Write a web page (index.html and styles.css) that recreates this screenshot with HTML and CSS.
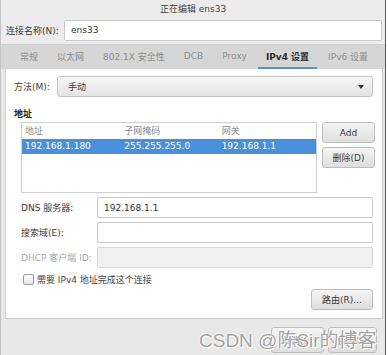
FILE: index.html
```html
<!DOCTYPE html>
<html lang="zh-CN">
<head>
    <meta charset="UTF-8">
    <title>正在编辑 ens33</title>
    <link rel="stylesheet" href="styles.css">
</head>
<body>
    <div class="window">
        <div class="titlebar">正在编辑 ens33</div>

        <div class="name-row">
            <label for="conn-name">连接名称(N):</label>
            <input type="text" id="conn-name" class="field name-field" value="ens33">
        </div>

        <div class="tabs">
            <span class="tab">常规</span>
            <span class="tab">以太网</span>
            <span class="tab">802.1X 安全性</span>
            <span class="tab">DCB</span>
            <span class="tab">Proxy</span>
            <span class="tab active">IPv4 设置</span>
            <span class="tab">IPv6 设置</span>
        </div>

        <div class="panel">
            <div class="method-row">
                <span class="label">方法(M):</span>
                <div class="combo">
                    <span>手动</span>
                    <span class="arrow"></span>
                </div>
            </div>

            <div class="section-title">地址</div>

            <div class="address-block">
                <table class="addr-table">
                    <thead>
                        <tr>
                            <th class="col-addr">地址</th>
                            <th class="col-mask">子网掩码</th>
                            <th>网关</th>
                        </tr>
                    </thead>
                    <tbody>
                        <tr class="selected">
                            <td>192.168.1.180</td>
                            <td>255.255.255.0</td>
                            <td>192.168.1.1</td>
                        </tr>
                    </tbody>
                </table>
                <div class="side-buttons">
                    <button class="btn">Add</button>
                    <button class="btn">删除(D)</button>
                </div>
            </div>

            <div class="form-rows">
                <div class="form-row">
                    <span class="label">DNS 服务器:</span>
                    <input type="text" class="field" value="192.168.1.1">
                </div>
                <div class="form-row">
                    <span class="label">搜索域(E):</span>
                    <input type="text" class="field" value="">
                </div>
                <div class="form-row disabled">
                    <span class="label">DHCP 客户端 ID:</span>
                    <input type="text" class="field" value="" disabled>
                </div>
            </div>

            <label class="check-row">
                <span class="checkbox"></span>
                需要 IPv4 地址完成这个连接
            </label>

            <div class="route-row">
                <button class="btn route-btn">路由(R)...</button>
            </div>
        </div>

        <div class="footer">
            <button class="btn footer-btn">取消(C)</button>
            <button class="btn footer-btn">保存(S)</button>
            <div class="watermark">CSDN @陈Sir的博客</div>
        </div>
    </div>
</body>
</html>
```

FILE: styles.css
```css
/* Reset */
* {
    margin: 0;
    padding: 0;
    box-sizing: border-box;
}

body {
    font-family: 'DejaVu Sans', 'Noto Sans CJK SC', sans-serif;
    font-size: 9px;
    color: #3c3c3c;
    background-color: #fff;
    width: 388px;
    height: 355px;
    overflow: hidden;
}

/* Window frame */
.window {
    position: relative;
    width: 386px;
    height: 355px;
    background-color: #e8e8e8;
    border-left: 1px solid #c4c4c4;
    border-right: 1px solid #5a5a5a;
}

.titlebar {
    height: 18px;
    line-height: 18px;
    text-align: center;
    color: #444;
    background-color: #ececec;
}

/* Connection name */
.name-row {
    display: flex;
    align-items: center;
    height: 26px;
    padding: 2px 2px 4px 5px;
    background-color: #ececec;
}

.name-row label {
    width: 58px;
}

.field {
    font-family: inherit;
    font-size: 9px;
    color: #333;
    height: 21px;
    padding: 0 6px;
    border: 1px solid #c9c9c9;
    border-radius: 2px;
    background-color: #fff;
    outline: none;
}

.name-field {
    flex: 1;
    margin-right: 1px;
}

/* Tabs */
.tabs {
    display: flex;
    height: 25px;
    padding-left: 11px;
    gap: 3px;
    background-color: #d6d6d6;
    border-top: 1px solid #cfcfcf;
}

.tab {
    display: flex;
    align-items: center;
    padding: 0 8px;
    color: #8e8e8e;
    border-bottom: 2px solid transparent;
}

.tab.active {
    color: #2e2e2e;
    font-weight: bold;
    border-bottom-color: #5b8fd0;
}

/* Main panel */
.panel {
    width: 378px;
    height: 250px;
    margin-left: 4px;
    background-color: #fff;
    border: 1px solid #cdcdcd;
    border-top: none;
    padding: 7px 8px 0 8px;
}

.method-row {
    display: flex;
    align-items: center;
}

.method-row .label {
    width: 43px;
}

.combo {
    flex: 1;
    display: flex;
    justify-content: space-between;
    align-items: center;
    height: 21px;
    padding: 0 8px 0 10px;
    border: 1px solid #c2c2c2;
    border-radius: 3px;
    background: linear-gradient(#f7f7f7, #e3e3e3);
    margin-right: 1px;
}

.arrow {
    width: 0;
    height: 0;
    border-left: 3px solid transparent;
    border-right: 3px solid transparent;
    border-top: 4px solid #333;
}

.section-title {
    margin-top: 10px;
    height: 14px;
    font-weight: bold;
    color: #222;
}

/* Address table */
.address-block {
    display: flex;
    margin-top: 1px;
    padding-left: 7px;
}

.addr-table {
    width: 296px;
    height: 71px;
    border: 1px solid #cfcfcf;
    border-collapse: collapse;
    display: block;
}

.addr-table thead,
.addr-table tbody {
    display: block;
}

.addr-table tr {
    display: flex;
}

.addr-table th,
.addr-table td {
    text-align: left;
    font-weight: normal;
    padding-left: 3px;
    width: 100px;
}

.addr-table th {
    height: 16px;
    line-height: 16px;
    color: #8a8a8a;
}

.addr-table th.col-addr {
    width: 102px;
}

.addr-table td {
    height: 15px;
    line-height: 15px;
}

.addr-table td:first-child {
    width: 102px;
}

.addr-table tr.selected {
    background-color: #4a8fda;
    color: #fff;
}

.side-buttons {
    display: flex;
    flex-direction: column;
    gap: 4px;
    margin-left: 5px;
}

.btn {
    font-family: inherit;
    font-size: 9px;
    color: #3a3a3a;
    height: 21px;
    border: 1px solid #bdbdbd;
    border-radius: 3px;
    background: linear-gradient(#f5f5f5, #dedede);
}

.side-buttons .btn {
    width: 53px;
}

/* DNS etc */
.form-rows {
    display: flex;
    flex-direction: column;
    gap: 4px;
    margin-top: 4px;
    padding-left: 7px;
}

.form-row {
    display: flex;
    align-items: center;
}

.form-row .label {
    width: 76px;
}

.form-row .field {
    flex: 1;
    margin-right: 1px;
}

.form-row.disabled .label {
    color: #a8a8a8;
}

.form-row .field:disabled {
    background-color: #f1f1f1;
    border-color: #d6d6d6;
}

.check-row {
    display: flex;
    align-items: center;
    gap: 3px;
    margin-top: 5px;
    padding-left: 9px;
    color: #444;
}

.checkbox {
    width: 11px;
    height: 11px;
    border: 1px solid #9a9a9a;
    border-radius: 2px;
    background: linear-gradient(#fdfdfd, #e6e6e6);
}

.route-row {
    display: flex;
    justify-content: flex-end;
    margin-top: 3px;
    padding-right: 1px;
}

.route-btn {
    width: 62px;
}

/* Bottom buttons */
.footer {
    position: relative;
    display: flex;
    justify-content: flex-end;
    gap: 4px;
    padding: 8px 8px 0 0;
    height: 36px;
}

.footer-btn {
    width: 53px;
    height: 26px;
    color: #777;
}

.footer-btn:last-of-type {
    width: 49px;
}

.watermark {
    position: absolute;
    left: 198px;
    top: 6px;
    font-family: 'Liberation Sans', 'Noto Sans CJK SC', sans-serif;
    font-size: 19px;
    color: #a4a4a4;
    text-shadow: 0 0 2px #fff, 0 0 2px #fff, 1px 1px 0 #fff;
    white-space: nowrap;
}
```
